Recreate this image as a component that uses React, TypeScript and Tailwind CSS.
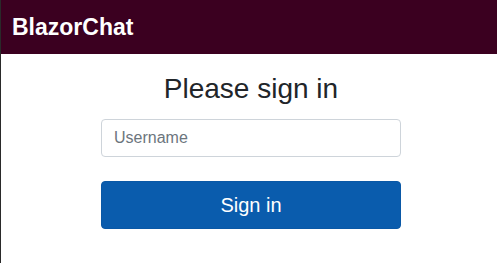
export default function App() {
  return (
    <div
      className="min-h-[263px] border-l border-[#2a2a2a] bg-white"
      style={{ fontFamily: '"Liberation Sans", Arial, sans-serif' }}
    >
      {/* Top bar */}
      <header className="flex h-[54px] items-center bg-[#3b0020] pl-[11px]">
        <span className="text-[23px] font-bold leading-none text-white">BlazorChat</span>
      </header>

      {/* Sign-in form */}
      <div className="flex flex-col items-center pt-[18px] pl-1">
        <h3 className="text-[28px] leading-[1.2] font-normal text-[#212529]">Please sign in</h3>
        <input
          type="text"
          placeholder="Username"
          className="mt-[13px] h-[38px] w-[300px] rounded-[4px] border border-[#ced4da] px-3 text-base text-[#495057] placeholder:text-[#6c757d] outline-none"
        />
        <button className="mt-6 h-[48px] w-[300px] rounded-[4px] border border-[#0a58a6] bg-[#0a5cad] text-[20px] text-white">
          Sign in
        </button>
      </div>
    </div>
  );
}
